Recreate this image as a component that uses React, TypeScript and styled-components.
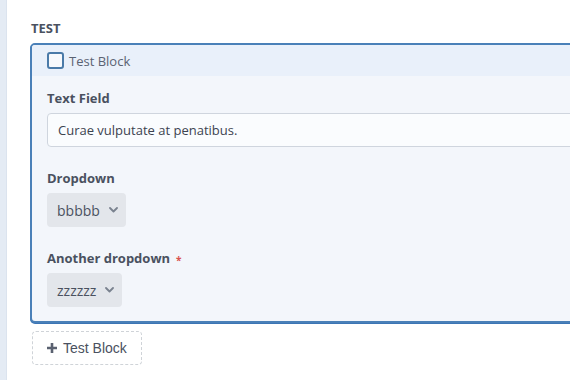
import React from 'react';
import styled, { createGlobalStyle } from 'styled-components';

const Global = createGlobalStyle`
  html, body {
    margin: 0;
    padding: 0;
    background: #ffffff;
    overflow: hidden;
  }
  body {
    font-family: "Open Sans", "Noto Sans", sans-serif;
    color: #4a5160;
  }
`;

const Page = styled.div`
  display: flex;
  width: 570px;
  height: 380px;
  overflow: hidden;
`;

const Rail = styled.div`
  flex: 0 0 6px;
  background: #e4ebf4;
  border-right: 1px solid #dbe3ee;
`;

const Main = styled.div`
  flex: 1;
  min-width: 0;
  padding: 18px 0 0 23px;
`;

const GroupTitle = styled.div`
  padding-left: 1px;
  font-size: 13px;
  font-weight: 700;
  line-height: 20px;
  color: #4a5160;
  text-transform: uppercase;
  margin-bottom: 5px;
`;

const Block = styled.div`
  width: 600px;
  border: 2px solid #4a80b8;
  border-radius: 5px;
  background: #f3f6fb;
  overflow: hidden;
  box-shadow: 0 1px 0 #3c75b5;
`;

const BlockHeader = styled.div`
  display: flex;
  align-items: center;
  gap: 5px;
  height: 31px;
  padding: 0 15px;
  background: #e9f0fa;
  font-size: 13px;
  color: #5a6272;
`;

const Check = styled.span`
  box-sizing: border-box;
  width: 17px;
  height: 17px;
  border: 2px solid #4a7aa8;
  border-radius: 3px;
  background: #f7f9fc;
`;

const BlockBody = styled.div`
  padding: 12px 15px 14px;
`;

const Field = styled.div`
  & + & {
    margin-top: 21px;
  }
`;

const Label = styled.div`
  display: flex;
  align-items: center;
  font-size: 13px;
  font-weight: 700;
  line-height: 20px;
  color: #4a5160;
  margin-bottom: 5px;
`;

const Required = styled.span`
  margin-left: 6px;
  color: #d9534f;
  font-size: 10px;
  line-height: 10px;
  margin-top: 3px;
`;

const TextInput = styled.div`
  box-sizing: border-box;
  height: 34px;
  display: flex;
  align-items: center;
  padding: 0 10px;
  border: 1px solid #cfd5de;
  border-radius: 4px;
  background: #fafcfe;
  font-size: 13px;
  color: #3c4350;
`;

const Select = styled.div`
  display: inline-flex;
  align-items: center;
  box-sizing: border-box;
  height: 34px;
  padding: 0 8px 0 10px;
  gap: 9px;
  border-radius: 4px;
  background: #e3e6eb;
  font-size: 14px;
  color: #4a5160;
`;

const AddButton = styled.button`
  display: inline-flex;
  align-items: center;
  gap: 6px;
  height: 34px;
  margin-top: 8px;
  margin-left: 2px;
  padding: 0 14px;
  border: 1px dashed #cfd3d8;
  border-radius: 4px;
  background: #ffffff;
  font-family: "Liberation Sans", Arial, sans-serif;
  font-size: 14px;
  color: #4a5160;
`;

const Chevron = () => (
  <svg width="9" height="6" viewBox="0 0 9 6" fill="none">
    <path d="M1 1l3.5 3.5L8 1" stroke="#7a828f" strokeWidth="1.8" strokeLinecap="round" strokeLinejoin="round" />
  </svg>
);

const Plus = () => (
  <svg width="10" height="10" viewBox="0 0 10 10">
    <path d="M5 0v10M0 5h10" stroke="#5a6170" strokeWidth="2.6" />
  </svg>
);

export default function App(): React.ReactElement {
  return (
    <Page>
      <Global />
      <Rail />
      <Main>
        <GroupTitle>Test</GroupTitle>
        <Block>
          <BlockHeader>
            <Check />
            Test Block
          </BlockHeader>
          <BlockBody>
            <Field>
              <Label>Text Field</Label>
              <TextInput>Curae vulputate at penatibus.</TextInput>
            </Field>
            <Field>
              <Label>Dropdown</Label>
              <Select>bbbbb<Chevron /></Select>
            </Field>
            <Field>
              <Label>
                Another dropdown<Required>*</Required>
              </Label>
              <Select>zzzzzz<Chevron /></Select>
            </Field>
          </BlockBody>
        </Block>
        <AddButton>
          <Plus />
          Test Block
        </AddButton>
      </Main>
    </Page>
  );
}
